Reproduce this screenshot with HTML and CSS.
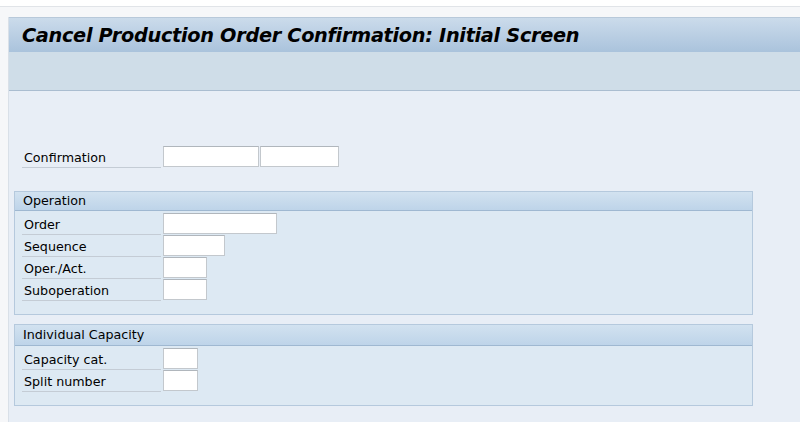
FILE: index.html
```html
<!DOCTYPE html>
<html>
<head>
<meta charset="utf-8">
<link rel="stylesheet" href="styles.css">
</head>
<body>
<div class="topline"></div>
<div class="window">
  <div class="titlebar"><h1>Cancel Production Order Confirmation: Initial Screen</h1></div>
  <div class="toolbar"></div>
  <div class="content">
    <div class="row single">
      <span class="label">Confirmation</span>
      <span class="inputs"><span class="field w96"></span><span class="field w79"></span></span>
    </div>
    <section class="group">
      <div class="group-head">Operation</div>
      <div class="group-body">
        <div class="row"><span class="label">Order</span><span class="field w114"></span></div>
        <div class="row"><span class="label">Sequence</span><span class="field w62"></span></div>
        <div class="row"><span class="label">Oper./Act.</span><span class="field w44"></span></div>
        <div class="row"><span class="label">Suboperation</span><span class="field w44"></span></div>
      </div>
    </section>
    <section class="group">
      <div class="group-head">Individual Capacity</div>
      <div class="group-body">
        <div class="row"><span class="label">Capacity cat.</span><span class="field w35"></span></div>
        <div class="row"><span class="label">Split number</span><span class="field w35"></span></div>
      </div>
    </section>
  </div>
</div>
</body>
</html>
```
FILE: styles.css
```css
html, body {
  margin: 0;
  padding: 0;
  height: 100%;
  overflow: hidden;
}
body {
  background: #f6f7f9;
  font-family: "DejaVu Sans", Tahoma, sans-serif;
  font-size: 12.7px;
  color: #000;
}
.topline {
  height: 6px;
  background: #ffffff;
  border-bottom: 1px solid #e1e4e8;
}
.window {
  margin: 10px 0 0 8px;
  border-left: 1px solid #d9e0e8;
  height: 415px;
  background: #e8eef6;
}
.titlebar {
  height: 35px;
  background: linear-gradient(#cbdbeb, #aac3dc);
  border-top: 1px solid #b8c9da;
  box-sizing: border-box;
  display: flex;
  align-items: center;
  padding-left: 13px;
}
.titlebar h1 {
  margin: 0;
  font-family: "DejaVu Sans", sans-serif;
  font-weight: bold;
  font-style: italic;
  font-size: 19.3px;
  letter-spacing: -0.3px;
  color: #000;
}
.toolbar {
  height: 38px;
  background: #cfdde8;
  border-bottom: 1px solid #aabdd0;
}
.content {
  padding: 55px 0 0 5px;
}
.row {
  display: flex;
  align-items: flex-start;
  height: 22px;
}
.row.single {
  padding-left: 8px;
  margin-bottom: 23px;
}
.label {
  box-sizing: border-box;
  width: 139px;
  height: 22px;
  padding: 4px 0 0 2px;
  border-bottom: 1px solid #c4ccd5;
  margin-right: 2px;
  line-height: 16px;
}
.inputs {
  display: flex;
  gap: 1px;
}
.field {
  display: block;
  box-sizing: border-box;
  height: 21px;
  background: #ffffff;
  border: 1px solid #c3c8cd;
  border-top-color: #b0b6bc;
}
.w96 { width: 96px; }
.w79 { width: 79px; }
.w114 { width: 114px; }
.w62 { width: 62px; }
.w44 { width: 44px; }
.w35 { width: 35px; }
.group {
  width: 739px;
  box-sizing: border-box;
  border: 1px solid #b5c9dd;
  background: #dde9f3;
  margin-bottom: 9px;
}
.group-head {
  height: 19px;
  box-sizing: border-box;
  background: linear-gradient(#d2e2f0, #bed4e9);
  border-bottom: 1px solid #9fb8d1;
  padding: 1px 0 0 8px;
  line-height: 16px;
}
.group-body {
  padding: 2px 0 13px 7px;
}
.group + .group .group-head {
  height: 21px;
  padding-top: 2px;
}
.group + .group .group-body {
  padding-top: 2px;
}
```
